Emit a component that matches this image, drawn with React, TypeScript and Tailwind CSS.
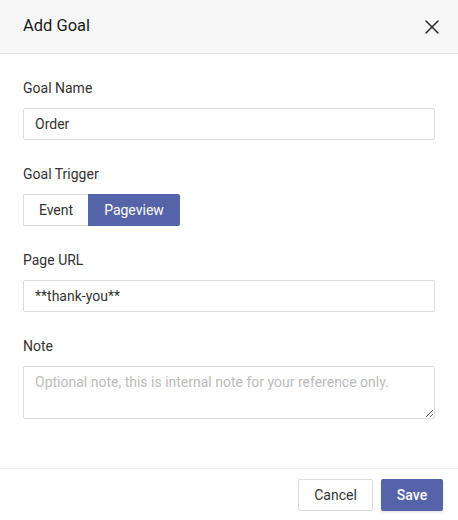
import { X } from 'lucide-react'

export default function App() {
  return (
    <div className="w-[458px] h-[520px] bg-white flex flex-col font-['Roboto','Liberation_Sans',sans-serif] text-[#333]">
      {/* Header */}
      <div className="h-[54px] shrink-0 bg-[#f7f7f7] border-b border-[#e8e8e8] flex items-center justify-between pl-[23px] pr-[14px]">
        <h1 className="text-[16.5px] font-normal text-[#1a1a1a]">Add Goal</h1>
        <X className="w-[24px] h-[24px] text-[#222]" strokeWidth={1.4} />
      </div>

      {/* Body */}
      <div className="flex-1 px-[23px] pt-[24px]">
        <label className="block text-[14px] leading-[20px] mb-[10px]">Goal Name</label>
        <input
          className="block w-full h-[32px] border border-[#dcdcdc] rounded-[2px] px-[11px] text-[14px] text-[#333] outline-none"
          defaultValue="Order"
        />

        <label className="block text-[14px] leading-[20px] mt-[24px] mb-[10px]">Goal Trigger</label>
        <div className="flex h-[32px]">
          <button className="w-[65px] border border-[#dcdcdc] border-r-0 rounded-l-[2px] bg-white text-[14px] text-[#333]">
            Event
          </button>
          <button className="w-[92px] rounded-r-[2px] bg-[#5563a8] text-[14px] text-white">Pageview</button>
        </div>

        <label className="block text-[14px] leading-[20px] mt-[24px] mb-[10px]">Page URL</label>
        <input
          className="block w-full h-[32px] border border-[#dcdcdc] rounded-[2px] px-[11px] text-[14px] text-[#333] outline-none"
          defaultValue="**thank-you**"
        />

        <label className="block text-[14px] leading-[20px] mt-[24px] mb-[10px]">Note</label>
        <textarea
          className="block w-full h-[53px] border border-[#dcdcdc] rounded-[2px] px-[11px] py-[5px] text-[14px] leading-[20px] text-[#333] placeholder:text-[#bbb] outline-none"
          placeholder="Optional note, this is internal note for your reference only."
        />
      </div>

      {/* Footer */}
      <div className="h-[52px] shrink-0 border-t border-[#ececec] flex items-start justify-end gap-[8px] pt-[10px] pr-[15px]">
        <button className="w-[75px] h-[32px] border border-[#dcdcdc] rounded-[2px] bg-white text-[14px] text-[#333]">
          Cancel
        </button>
        <button className="w-[62px] h-[32px] rounded-[2px] bg-[#5563a8] text-[14px] font-medium text-white shadow-sm">
          Save
        </button>
      </div>
    </div>
  )
}
